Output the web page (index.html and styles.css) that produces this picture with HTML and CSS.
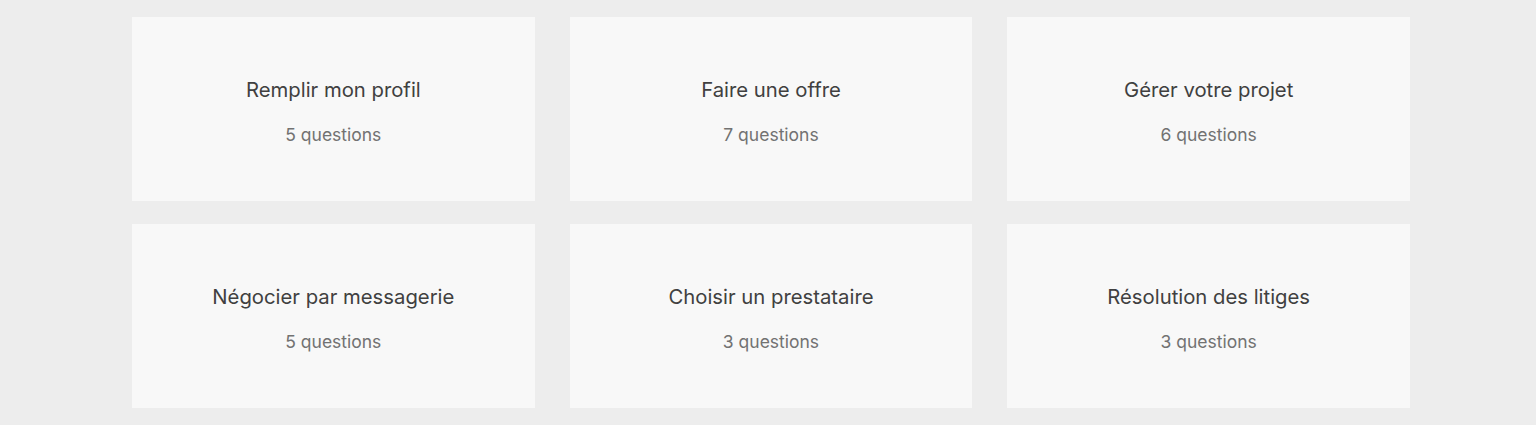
FILE: index.html
```html
<!DOCTYPE html>
<html lang="fr">
<head>
  <meta charset="UTF-8" />
  <meta name="viewport" content="width=device-width, initial-scale=1" />
  <title>Aide</title>
  <link rel="stylesheet" href="styles.css">
</head>
<body>
  <div id="topics">
    <a class="topic" href="#">
      <div class="topic-title">Remplir mon profil</div>
      <div class="topic-count">5 questions</div>
    </a>
    <a class="topic" href="#">
      <div class="topic-title">Faire une offre</div>
      <div class="topic-count">7 questions</div>
    </a>
    <a class="topic" href="#">
      <div class="topic-title">Gérer votre projet</div>
      <div class="topic-count">6 questions</div>
    </a>
    <a class="topic" href="#">
      <div class="topic-title">Négocier par messagerie</div>
      <div class="topic-count">5 questions</div>
    </a>
    <a class="topic" href="#">
      <div class="topic-title">Choisir un prestataire</div>
      <div class="topic-count">3 questions</div>
    </a>
    <a class="topic" href="#">
      <div class="topic-title">Résolution des litiges</div>
      <div class="topic-count">3 questions</div>
    </a>
  </div>
</body>
</html>
```

FILE: styles.css
```css
body {
  font-family: 'Inter', 'Liberation Sans', sans-serif;
  background: #ededed;
  margin: 0;
  padding: 17px 0 0 132px;
}

#topics {
  display: grid;
  grid-template-columns: repeat(3, 1fr);
  column-gap: 35px;
  row-gap: 23px;
  width: 1278px;
}

.topic {
  display: flex;
  flex-direction: column;
  align-items: center;
  justify-content: center;
  height: 184px;
  padding-top: 3px;
  box-sizing: border-box;
  background: #f8f8f8;
  text-decoration: none;
}

.topic-title {
  font-size: 20.3px;
  color: #404040;
  margin-bottom: 22px;
}

.topic-count {
  font-size: 17.5px;
  color: #727272;
}
```
